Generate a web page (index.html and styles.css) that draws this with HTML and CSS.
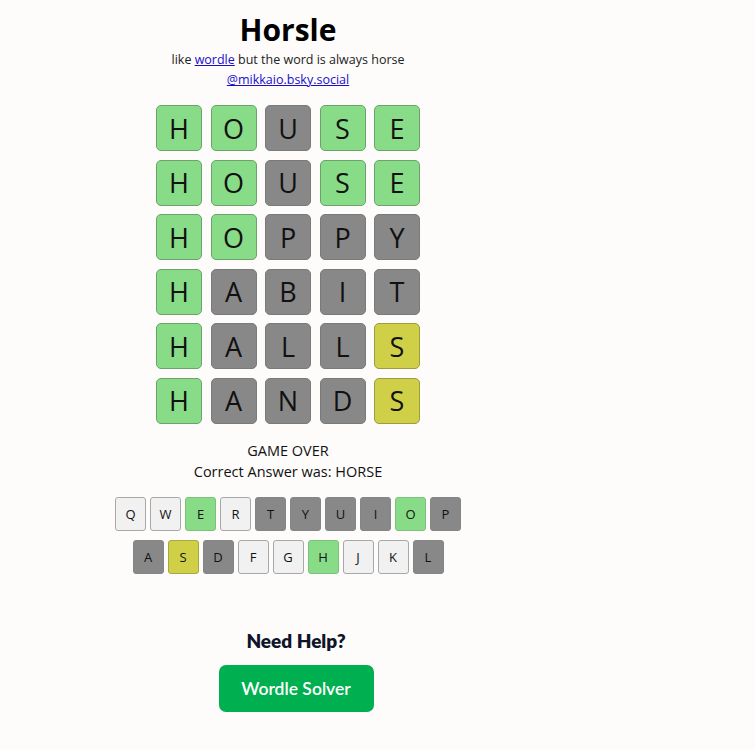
FILE: index.html
```html
<!DOCTYPE html>
<html>
<head>
<meta charset="utf-8">
<title>Horsle</title>
<link rel="stylesheet" href="styles.css">
</head>
<body>
<div class="page">
  <div class="game">
    <h1 class="title">Horsle</h1>
    <p class="sub">like <a href="#">wordle</a> but the word is always horse</p>
    <p class="sub"><a href="#">@mikkaio.bsky.social</a></p>
    <div class="board">
      <div class="row"><div class="tile g">H</div><div class="tile g">O</div><div class="tile x">U</div><div class="tile g">S</div><div class="tile g">E</div></div>
      <div class="row"><div class="tile g">H</div><div class="tile g">O</div><div class="tile x">U</div><div class="tile g">S</div><div class="tile g">E</div></div>
      <div class="row"><div class="tile g">H</div><div class="tile g">O</div><div class="tile x">P</div><div class="tile x">P</div><div class="tile x">Y</div></div>
      <div class="row"><div class="tile g">H</div><div class="tile x">A</div><div class="tile x">B</div><div class="tile x">I</div><div class="tile x">T</div></div>
      <div class="row"><div class="tile g">H</div><div class="tile x">A</div><div class="tile x">L</div><div class="tile x">L</div><div class="tile y">S</div></div>
      <div class="row"><div class="tile g">H</div><div class="tile x">A</div><div class="tile x">N</div><div class="tile x">D</div><div class="tile y">S</div></div>
    </div>
    <div class="status">
      <div>GAME OVER</div>
      <div>Correct Answer was: HORSE</div>
    </div>
    <div class="keyboard">
      <div class="krow">
        <div class="key">Q</div><div class="key">W</div><div class="key g">E</div><div class="key">R</div><div class="key x">T</div><div class="key x">Y</div><div class="key x">U</div><div class="key x">I</div><div class="key g">O</div><div class="key x">P</div>
      </div>
      <div class="krow">
        <div class="key x">A</div><div class="key y">S</div><div class="key x">D</div><div class="key">F</div><div class="key">G</div><div class="key g">H</div><div class="key">J</div><div class="key">K</div><div class="key x">L</div>
      </div>
    </div>
  </div>
  <div class="help">
    <h2 class="help-title">Need Help?</h2>
    <a class="solver" href="#">Wordle Solver</a>
  </div>
</div>
</body>
</html>
```

FILE: styles.css
```css
html, body {
  background: #fdfcfb;
}
body {
  margin: 0;
  font-family: "Open Sans", "Noto Sans", sans-serif;
  color: #111;
}
.page {
  width: 592px;
}
.game {
  width: 576px;
  display: flex;
  flex-direction: column;
  align-items: center;
}
.title {
  margin: 10px 0 0;
  font-size: 30px;
  line-height: 40px;
  font-weight: 700;
  color: #000;
}
.sub {
  margin: 0;
  font-size: 12.5px;
  line-height: 20px;
  color: #222;
}
.sub a {
  color: #1a0dcc;
}
.board {
  margin-top: 15px;
  display: flex;
  flex-direction: column;
  gap: 8.6px;
}
.row {
  display: flex;
  gap: 8.5px;
}
.tile {
  width: 44px;
  height: 44px;
  border: 1px solid #6f7a6f;
  border-radius: 5px;
  display: flex;
  align-items: center;
  justify-content: center;
  font-size: 27px;
  color: #111;
  background: #888;
}
.tile.g { background: #88dc88; border-color: #6ba46b; }
.tile.x { background: #888888; border-color: #7a7a7a; }
.tile.y { background: #cfcf48; border-color: #9c9c40; }
.status {
  margin-top: 16px;
  text-align: center;
  font-size: 14.5px;
  line-height: 21px;
  color: #111;
}
.keyboard {
  margin-top: 15px;
  display: flex;
  flex-direction: column;
  align-items: center;
  gap: 9px;
}
.krow {
  display: flex;
  gap: 4px;
}
.key {
  width: 29px;
  height: 32px;
  border: 1px solid #a8a8a8;
  border-radius: 3px;
  background: #f1f1f1;
  display: flex;
  align-items: center;
  justify-content: center;
  font-size: 13px;
  color: #111;
}
.key.g { background: #88dc88; border-color: #7cc27c; }
.key.x { background: #888888; border-color: #858585; }
.key.y { background: #cfcf48; border-color: #a8a840; }
.help {
  margin-top: 54px;
  display: flex;
  flex-direction: column;
  align-items: center;
}
.help-title {
  margin: 0;
  font-family: "Lato", "Noto Sans", sans-serif;
  font-size: 19px;
  line-height: 26px;
  font-weight: 800;
  color: #10142a;
}
.solver {
  margin-top: 11px;
  width: 155px;
  height: 47px;
  border-radius: 7px;
  background: #00b050;
  color: #fff;
  text-decoration: none;
  display: flex;
  align-items: center;
  justify-content: center;
  font-family: "Lato", "Noto Sans", sans-serif;
  font-size: 17.5px;
  font-weight: 600;
}
```
